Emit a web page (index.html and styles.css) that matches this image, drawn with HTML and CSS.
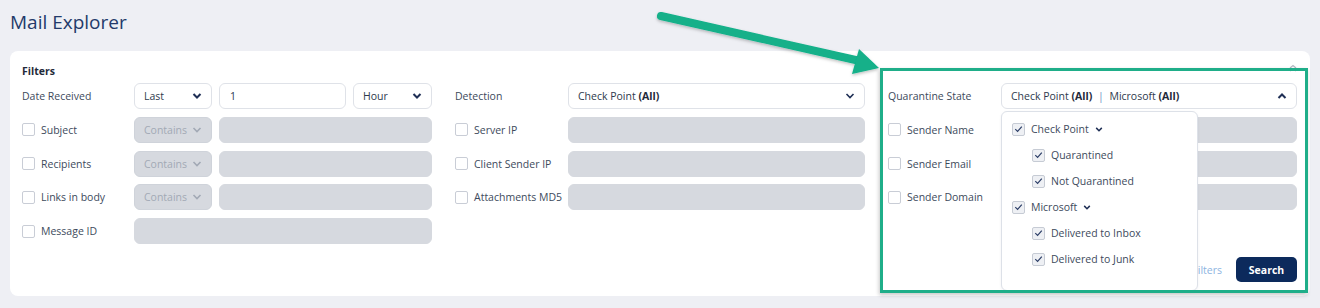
FILE: index.html
```html
<!DOCTYPE html>
<html>
<head>
<meta charset="utf-8">
<title>Mail Explorer</title>
<link rel="stylesheet" href="styles.css">
</head>
<body>
<div class="page">
  <h1 class="title">Mail Explorer</h1>
  <div class="card">
    <div class="collapse">
      <svg width="8" height="8" viewBox="0 0 8 8"><path d="M1 4 L4 1.5 L7 4 M1 7 L4 4.5 L7 7" fill="none" stroke="#b3b8c2" stroke-width="1.2"/></svg>
    </div>
    <div class="card-title">Filters</div>
    <div class="grid">
      <div class="col">
        <div class="row">
          <div class="label">Date Received</div>
          <div class="ctrls">
            <div class="select w78"><span>Last</span><svg class="chev" viewBox="0 0 10 6"><path d="M1.5 1 L5 4.5 L8.5 1" fill="none" stroke="#1f2f55" stroke-width="2"/></svg></div>
            <div class="input grow"><span>1</span></div>
            <div class="select w79"><span>Hour</span><svg class="chev" viewBox="0 0 10 6"><path d="M1.5 1 L5 4.5 L8.5 1" fill="none" stroke="#1f2f55" stroke-width="2"/></svg></div>
          </div>
        </div>
        <div class="row">
          <div class="label"><span class="cb"></span>Subject</div>
          <div class="ctrls">
            <div class="select w78 disabled"><span>Contains</span><svg class="chev" viewBox="0 0 10 6"><path d="M1.5 1 L5 4.5 L8.5 1" fill="none" stroke="#a2a9b5" stroke-width="1.6"/></svg></div>
            <div class="input grow disabled"></div>
          </div>
        </div>
        <div class="row">
          <div class="label"><span class="cb"></span>Recipients</div>
          <div class="ctrls">
            <div class="select w78 disabled"><span>Contains</span><svg class="chev" viewBox="0 0 10 6"><path d="M1.5 1 L5 4.5 L8.5 1" fill="none" stroke="#a2a9b5" stroke-width="1.6"/></svg></div>
            <div class="input grow disabled"></div>
          </div>
        </div>
        <div class="row">
          <div class="label"><span class="cb"></span>Links in body</div>
          <div class="ctrls">
            <div class="select w78 disabled"><span>Contains</span><svg class="chev" viewBox="0 0 10 6"><path d="M1.5 1 L5 4.5 L8.5 1" fill="none" stroke="#a2a9b5" stroke-width="1.6"/></svg></div>
            <div class="input grow disabled"></div>
          </div>
        </div>
        <div class="row">
          <div class="label"><span class="cb"></span>Message ID</div>
          <div class="ctrls">
            <div class="input grow disabled"></div>
          </div>
        </div>
      </div>

      <div class="col">
        <div class="row">
          <div class="label">Detection</div>
          <div class="ctrls">
            <div class="select grow"><span>Check Point <b>(All)</b></span><svg class="chev" viewBox="0 0 10 6"><path d="M1.5 1 L5 4.5 L8.5 1" fill="none" stroke="#1f2f55" stroke-width="1.6"/></svg></div>
          </div>
        </div>
        <div class="row">
          <div class="label"><span class="cb"></span>Server IP</div>
          <div class="ctrls"><div class="input grow disabled"></div></div>
        </div>
        <div class="row">
          <div class="label"><span class="cb"></span>Client Sender IP</div>
          <div class="ctrls"><div class="input grow disabled"></div></div>
        </div>
        <div class="row">
          <div class="label"><span class="cb"></span>Attachments MD5</div>
          <div class="ctrls"><div class="input grow disabled"></div></div>
        </div>
      </div>

      <div class="col">
        <div class="row">
          <div class="label">Quarantine State</div>
          <div class="ctrls anchor">
            <div class="select grow open"><span>Check Point <b>(All)</b> <i class="sep">|</i> Microsoft <b>(All)</b></span><svg class="chev" viewBox="0 0 10 6"><path d="M1.5 5 L5 1.5 L8.5 5" fill="none" stroke="#1f2f55" stroke-width="2"/></svg></div>
            <div class="dropdown">
              <div class="opt"><span class="cb on"><svg viewBox="0 0 12 12"><path d="M2.5 6.2 L5 8.6 L9.6 3.4" fill="none" stroke="#2b3d66" stroke-width="1.3"/></svg></span>Check Point<svg class="chev-s" viewBox="0 0 10 6"><path d="M1.5 1 L5 4.5 L8.5 1" fill="none" stroke="#1f2f55" stroke-width="1.9"/></svg></div>
              <div class="opt sub"><span class="cb on"><svg viewBox="0 0 12 12"><path d="M2.5 6.2 L5 8.6 L9.6 3.4" fill="none" stroke="#2b3d66" stroke-width="1.3"/></svg></span>Quarantined</div>
              <div class="opt sub"><span class="cb on"><svg viewBox="0 0 12 12"><path d="M2.5 6.2 L5 8.6 L9.6 3.4" fill="none" stroke="#2b3d66" stroke-width="1.3"/></svg></span>Not Quarantined</div>
              <div class="opt"><span class="cb on"><svg viewBox="0 0 12 12"><path d="M2.5 6.2 L5 8.6 L9.6 3.4" fill="none" stroke="#2b3d66" stroke-width="1.3"/></svg></span>Microsoft<svg class="chev-s" viewBox="0 0 10 6"><path d="M1.5 1 L5 4.5 L8.5 1" fill="none" stroke="#1f2f55" stroke-width="1.9"/></svg></div>
              <div class="opt sub"><span class="cb on"><svg viewBox="0 0 12 12"><path d="M2.5 6.2 L5 8.6 L9.6 3.4" fill="none" stroke="#2b3d66" stroke-width="1.3"/></svg></span>Delivered to Inbox</div>
              <div class="opt sub"><span class="cb on"><svg viewBox="0 0 12 12"><path d="M2.5 6.2 L5 8.6 L9.6 3.4" fill="none" stroke="#2b3d66" stroke-width="1.3"/></svg></span>Delivered to Junk</div>
            </div>
          </div>
        </div>
        <div class="row">
          <div class="label"><span class="cb"></span>Sender Name</div>
          <div class="ctrls"><div class="input grow disabled"></div></div>
        </div>
        <div class="row">
          <div class="label"><span class="cb"></span>Sender Email</div>
          <div class="ctrls"><div class="input grow disabled"></div></div>
        </div>
        <div class="row">
          <div class="label"><span class="cb"></span>Sender Domain</div>
          <div class="ctrls"><div class="input grow disabled"></div></div>
        </div>
      </div>

      <div class="actions">
        <span class="clear">Clear Filters</span>
        <button class="search">Search</button>
      </div>
    </div>
  </div>

  <div class="highlight"></div>
  <svg class="arrow" width="1320" height="308" viewBox="0 0 1320 308">
    <defs>
      <filter id="sh" x="-10%" y="-50%" width="120%" height="200%">
        <feDropShadow dx="0" dy="1.5" stdDeviation="1.5" flood-color="#000" flood-opacity="0.25"/>
      </filter>
    </defs>
    <g filter="url(#sh)" fill="#12b089">
      <line x1="661" y1="16" x2="860" y2="61" stroke="#12b089" stroke-width="8" stroke-linecap="round"/>
      <polygon points="879,68 859,49 852,74"/>
    </g>
  </svg>
</div>
</body>
</html>
```

FILE: styles.css
```css
* { box-sizing: border-box; }
html, body { margin: 0; padding: 0; }
body {
  background: #eeeff4;
  font-family: "Open Sans", "Liberation Sans", sans-serif;
  color: #3b4759;
  width: 1320px;
  height: 308px;
  overflow: hidden;
}
.page { position: relative; width: 1320px; height: 308px; padding: 0 10px; }
.title {
  margin: 0;
  padding-top: 9px;
  height: 51px;
  font-size: 19px;
  font-weight: 400;
  color: #233a6a;
  line-height: 26px;
}
.card {
  position: relative;
  background: #fff;
  border-radius: 8px;
  height: 245px;
  padding: 12px 13px 0 12px;
}
.collapse { position: absolute; right: 13px; top: 13px; width: 8px; height: 8px; line-height: 0; }
.card-title { font-size: 10.5px; font-weight: 700; color: #1f2a3a; line-height: 16px; height: 16px; }
.grid {
  margin-top: 4px;
  display: grid;
  grid-template-columns: 410px 410px 409px;
  column-gap: 23px;
  grid-template-rows: auto auto;
}
.col { display: flex; flex-direction: column; gap: 7.8px; }
.row { display: flex; align-items: center; height: 26px; }
.label {
  width: 112px;
  flex: none;
  display: flex;
  align-items: center;
  font-size: 10.5px;
  color: #3d4a5c;
  white-space: nowrap;
}
.col:nth-child(2) .label, .col:nth-child(3) .label { width: 113px; }
.cb {
  width: 13px; height: 13px;
  border: 1px solid #c9cdd6;
  border-radius: 2px;
  background: #fff;
  margin-right: 6px;
  flex: none;
  display: inline-flex;
  align-items: center;
  justify-content: center;
}
.cb.on { background: #eef0f4; border-color: #c6cbd4; }
.cb svg { width: 12px; height: 12px; }
.ctrls { flex: 1; display: flex; gap: 7px; height: 26px; }
.anchor { position: relative; }
.select, .input {
  height: 26px;
  border: 1px solid #dfe2e8;
  border-radius: 6px;
  background: #fff;
  display: flex;
  align-items: center;
  font-size: 10.5px;
  color: #2e3a4d;
  padding: 0 9px;
  white-space: nowrap;
}
.input { padding-left: 10px; }
.select { justify-content: space-between; }
.select b { font-weight: 700; color: #1f2a3a; }
.w78 { width: 78px; flex: none; }
.w79 { width: 79px; flex: none; }
.grow { flex: 1; }
.chev { width: 10px; height: 6px; }
.disabled { background: #d6d9df; border-color: #cfd3da; color: #a2a9b5; }
.input.disabled { border-color: #d6d9df; }
.sep { font-style: normal; color: #6e8fc4; margin: 0 3px; }
.dropdown {
  position: absolute;
  left: 0;
  top: 28px;
  width: 197px;
  height: 180px;
  background: #fff;
  border: 1px solid #dde1e8;
  border-radius: 6px;
  box-shadow: 0 1px 3px rgba(30, 40, 60, 0.06);
  padding-top: 4px;
  z-index: 2;
}
.opt {
  height: 26px;
  display: flex;
  align-items: center;
  padding-left: 10px;
  font-size: 10.5px;
  color: #3d4a5c;
}
.opt.sub { padding-left: 30px; }
.chev-s { width: 8px; height: 5px; margin-left: 6px; margin-top: 1px; }
.actions {
  grid-column: 3;
  grid-row: 2;
  display: flex;
  justify-content: flex-end;
  align-items: center;
  gap: 14px;
  margin-top: 13px;
}
.clear { font-size: 10.5px; color: #8db4df; }
.search {
  width: 61px;
  height: 25px;
  border: none;
  border-radius: 5px;
  background: #0c2a5c;
  color: #fff;
  font-family: "Open Sans", "Liberation Sans", sans-serif;
  font-weight: 700;
  font-size: 10.5px;
  padding: 0;
}
.highlight {
  position: absolute;
  left: 880px;
  top: 68px;
  width: 428px;
  height: 225px;
  border: 3px solid #1fae89;
  box-shadow: -1px 2px 4px rgba(0, 0, 0, 0.22);
  pointer-events: none;
  z-index: 3;
}
.arrow { position: absolute; left: 0; top: 0; pointer-events: none; z-index: 4; }
```
